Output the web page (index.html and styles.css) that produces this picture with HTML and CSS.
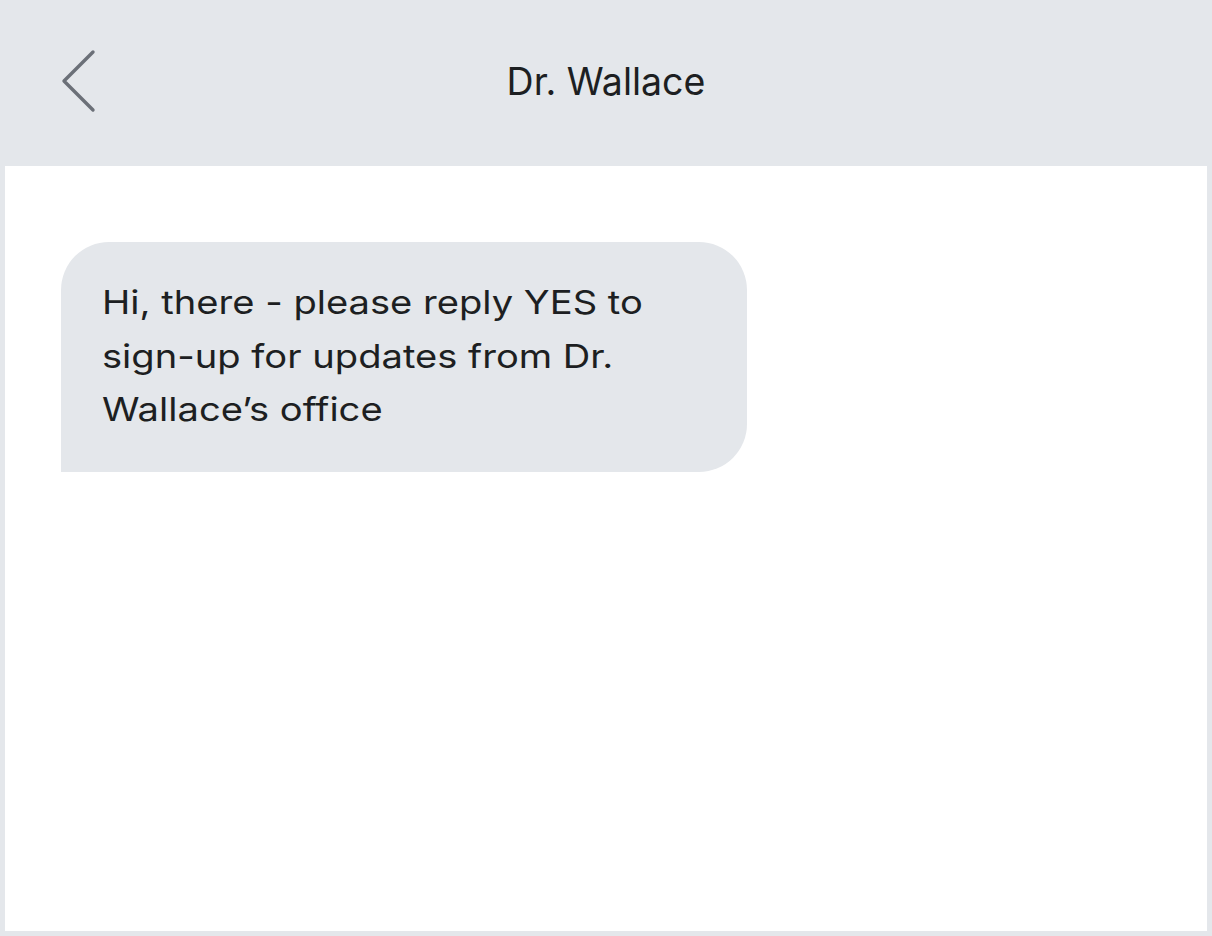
FILE: index.html
```html
<!DOCTYPE html>
<html lang="en">
<head>
<meta charset="utf-8">
<title>Dr. Wallace</title>
<link rel="stylesheet" href="styles.css">
</head>
<body>
<div class="app">
  <header class="topbar">
    <div class="back">
      <svg width="40" height="66" viewBox="0 0 40 66" aria-hidden="true">
        <polyline points="33,4 4,33 33,62" fill="none" stroke="#6b7078" stroke-width="3.4" stroke-linecap="round" stroke-linejoin="round"/>
      </svg>
    </div>
    <h1 class="title">Dr. Wallace</h1>
    <div class="spacer"></div>
  </header>
  <main class="thread">
    <div class="bubble"><span class="msg">Hi, there - please reply YES to sign-up for updates from Dr. Wallace’s office</span></div>
  </main>
</div>
</body>
</html>
```

FILE: styles.css
```css
* { box-sizing: border-box; }
html, body { margin: 0; padding: 0; }
body {
  background: #e4e7eb;
  font-family: Inter, Roboto, "Liberation Sans", sans-serif;
  color: #1d1f22;
  width: 1212px;
  height: 936px;
  overflow: hidden;
}
.app {
  display: flex;
  flex-direction: column;
  height: 936px;
}
.topbar {
  height: 166px;
  display: grid;
  grid-template-columns: 1fr auto 1fr;
  align-items: center;
}
.back {
  padding-left: 60px;
  display: flex;
  align-items: center;
  height: 66px;
  margin-top: -4px;
}
.back svg { display: block; }
.title {
  margin: 0;
  font-size: 37.5px;
  font-weight: 400;
  line-height: 44px;
  margin-top: -2px;
}
.thread {
  flex: 1;
  background: #ffffff;
  margin: 0 5px 5px 5px;
  padding: 76px 56px;
}
.bubble {
  width: 686px;
  background: #e4e7eb;
  border-radius: 48px 48px 48px 0;
  padding: 34px 40px 35px 41px;
  font-size: 33px;
  line-height: 53.5px;
}
.msg {
  display: block;
  width: 490px;
  transform: scaleX(1.155);
  transform-origin: 0 0;
}
```
